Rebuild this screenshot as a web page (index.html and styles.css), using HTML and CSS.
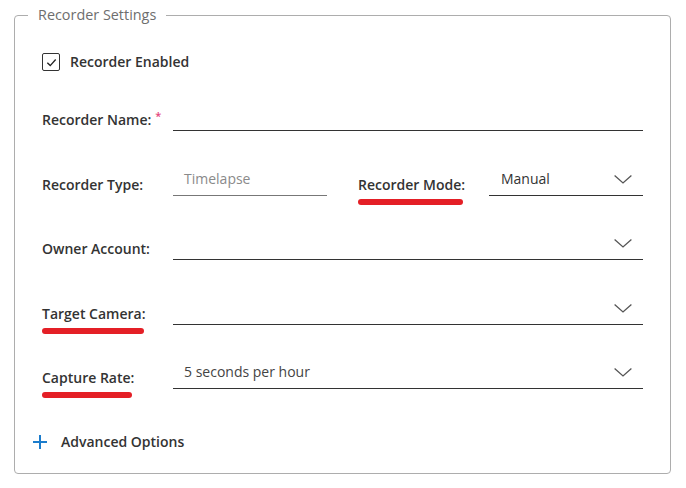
FILE: index.html
```html
<!DOCTYPE html>
<html>
<head>
<meta charset="utf-8">
<link rel="stylesheet" href="styles.css">
</head>
<body>
<fieldset class="panel">
  <legend class="panel-title">Recorder Settings</legend>

  <label class="check-row">
    <span class="checkbox">
      <svg viewBox="0 0 18 18" width="18" height="18"><path d="M4 9.2 L7.5 12.7 L14 5.4" fill="none" stroke="#222" stroke-width="1.6"/></svg>
    </span>
    <span class="check-label">Recorder Enabled</span>
  </label>

  <div class="form-grid">
    <div class="label">Recorder Name:<span class="req">*</span></div>
    <div class="field wide"></div>

    <div class="label">Recorder Type:</div>
    <div class="field muted"><span class="value">Timelapse</span></div>
    <div class="spacer"></div>
    <div class="label"><span class="mark">Recorder Mode:</span></div>
    <div class="field select"><span class="value dark">Manual</span><svg class="chev" viewBox="0 0 18 9" width="18" height="9"><path d="M0.6 0.6 L9 8 L17.4 0.6" fill="none" stroke="#555" stroke-width="1.3"/></svg></div>

    <div class="label">Owner Account:</div>
    <div class="field wide select"><span class="value"></span><svg class="chev" viewBox="0 0 18 9" width="18" height="9"><path d="M0.6 0.6 L9 8 L17.4 0.6" fill="none" stroke="#555" stroke-width="1.3"/></svg></div>

    <div class="label"><span class="mark">Target Camera:</span></div>
    <div class="field wide select"><span class="value"></span><svg class="chev" viewBox="0 0 18 9" width="18" height="9"><path d="M0.6 0.6 L9 8 L17.4 0.6" fill="none" stroke="#555" stroke-width="1.3"/></svg></div>

    <div class="label"><span class="mark">Capture Rate:</span></div>
    <div class="field wide select"><span class="value">5 seconds per hour</span><svg class="chev" viewBox="0 0 18 9" width="18" height="9"><path d="M0.6 0.6 L9 8 L17.4 0.6" fill="none" stroke="#555" stroke-width="1.3"/></svg></div>
  </div>

  <div class="advanced">
    <svg class="plus" viewBox="0 0 14 14" width="14" height="14"><path d="M7 0 V14 M0 7 H14" stroke="#1b7ccc" stroke-width="2"/></svg>
    <span class="advanced-label">Advanced Options</span>
  </div>
</fieldset>
</body>
</html>
```

FILE: styles.css
```css
html, body {
  margin: 0;
  background: #fff;
}
body {
  padding: 5px 14px 0 14px;
  font-family: "Open Sans", "Liberation Sans", sans-serif;
  font-size: 14px;
  color: #333;
}
.panel {
  margin: 0;
  width: 657px;
  height: 469px;
  box-sizing: border-box;
  border: 1px solid #adadad;
  border-radius: 4px;
  padding: 0 27px;
  min-width: 0;
}
.panel-title {
  margin-left: -14px;
  padding: 0 10px;
  line-height: 20px;
  font-size: 14.4px;
  color: #6e6e6e;
}
.check-row {
  display: flex;
  align-items: center;
  gap: 10px;
  margin-top: 27px;
  height: 20px;
}
.checkbox {
  width: 18px;
  height: 18px;
  box-sizing: border-box;
  border: 1.5px solid #333;
  border-radius: 2px;
  display: flex;
  align-items: center;
  justify-content: center;
}
.checkbox svg {
  width: 15px;
  height: 15px;
}
.check-label,
.label,
.advanced-label {
  font-weight: 600;
  color: #333;
  line-height: 20px;
}
.form-grid {
  display: grid;
  grid-template-columns: 131px 154px 31px 131px 154px;
  grid-auto-rows: 27px;
  row-gap: 37.5px;
  margin-top: 32px;
  align-items: end;
}
.label {
  padding-bottom: 1px;
  white-space: nowrap;
}
.req {
  color: #e4457c;
  font-size: 11px;
  vertical-align: 5px;
  margin-left: 4px;
}
.mark {
  position: relative;
  display: inline-block;
}
.mark::after {
  content: "";
  position: absolute;
  left: 0;
  right: 2px;
  top: 24px;
  height: 6px;
  border-radius: 3px;
  background: #e41f26;
}
.field {
  height: 27px;
  box-sizing: border-box;
  border-bottom: 1px solid #333;
  display: flex;
  align-items: flex-start;
  justify-content: space-between;
  padding: 0 11px 0 11px;
}
.field.muted {
  border-bottom-color: #777;
}
.field.wide {
  grid-column: 2 / 6;
}
.value {
  line-height: 20px;
  color: #444;
}
.muted .value {
  color: #8a8a8a;
}
.value.dark {
  color: #333;
  padding-left: 1px;
}
.chev {
  margin-top: 6px;
}
.advanced {
  display: flex;
  align-items: center;
  gap: 14px;
  margin-left: -9px;
  margin-top: 43px;
  height: 20px;
}
```
